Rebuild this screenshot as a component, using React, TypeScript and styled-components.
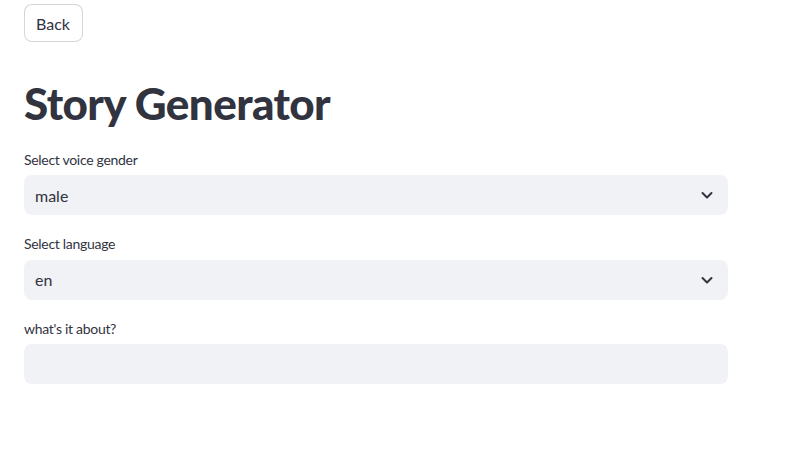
import styled, { createGlobalStyle } from "styled-components";

const GlobalStyle = createGlobalStyle`
  body {
    margin: 0;
    background: #ffffff;
    font-family: "Source Sans Pro", Lato, "Liberation Sans", sans-serif;
    color: #31333f;
  }
`;

const Chevron = () => (
  <svg width="16" height="16" viewBox="0 0 16 16" fill="none">
    <path
      d="M3.5 6 L8 10.5 L12.5 6"
      stroke="#31333f"
      strokeWidth="2"
      strokeLinecap="round"
      strokeLinejoin="round"
    />
  </svg>
);

const Field = ({
  label,
  value,
  select,
}: {
  label: string;
  value?: string;
  select?: boolean;
}) => (
  <StyledField>
    <StyledLabel>{label}</StyledLabel>
    <StyledBox>
      <span className="field-value">{value}</span>
      {select && <Chevron />}
    </StyledBox>
  </StyledField>
);

const App = () => {
  return (
    <>
      <GlobalStyle />
      <StyledPage>
        <StyledButton>Back</StyledButton>
        <StyledTitle>Story Generator</StyledTitle>
        <Field label="Select voice gender" value="male" select />
        <Field label="Select language" value="en" select />
        <Field label="what's it about?" />
      </StyledPage>
    </>
  );
};

const StyledPage = styled.div`
  width: 704px;
  padding: 4px 24px 0;
  display: flex;
  flex-direction: column;
  gap: 16px;
`;

const StyledButton = styled.button`
  align-self: flex-start;
  height: 38px;
  padding: 0 12px 0 11px;
  background: #ffffff;
  border: 1px solid rgba(49, 51, 63, 0.2);
  border-radius: 8px;
  font-family: inherit;
  font-size: 16px;
  color: #31333f;
`;

const StyledTitle = styled.h1`
  margin: 0;
  height: 73px;
  display: flex;
  align-items: flex-end;
  font-size: 44px;
  font-weight: 900;
  line-height: 1;
  padding-bottom: 6px;
  box-sizing: border-box;
  letter-spacing: -0.6px;
`;

const StyledField = styled.div`
  display: flex;
  flex-direction: column;

  & + & {
    margin-top: 0.5px;
  }
`;

const StyledLabel = styled.label`
  height: 24px;
  margin-bottom: 4px;
  display: flex;
  align-items: center;
  font-size: 14px;
  letter-spacing: -0.3px;
`;

const StyledBox = styled.div`
  height: 40px;
  background: #f0f2f6;
  border-radius: 8px;
  display: flex;
  align-items: center;
  justify-content: space-between;
  padding: 0 13px 0 11px;

  .field-value {
    font-size: 16px;
  }
`;

export default App;
